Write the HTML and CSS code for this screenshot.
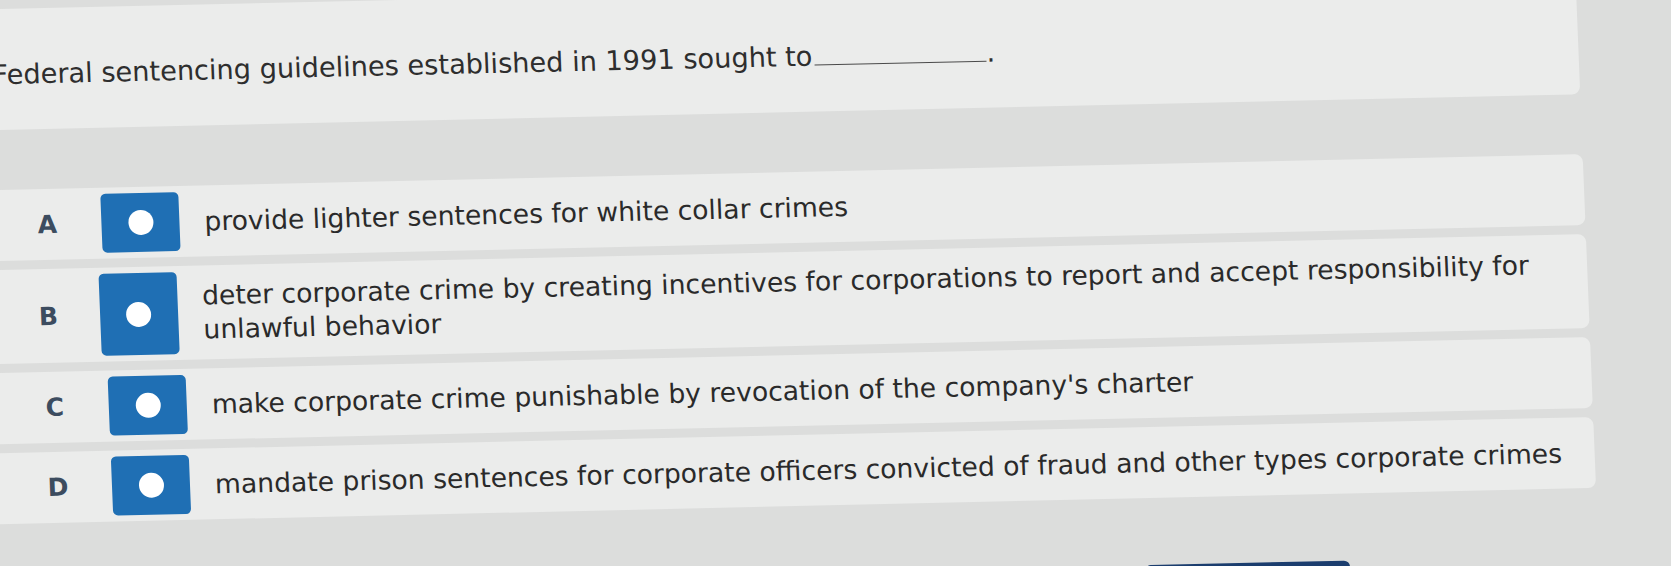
FILE: index.html
```html
<!DOCTYPE html>
<html lang="en">

<head>
  <meta charset="UTF-8">
  <meta name="viewport" content="width=device-width, initial-scale=1.0">
  <title>Question</title>
  <link rel="stylesheet" href="styles.css">
</head>

<body>
  <div class="screen">
    <!-- Question -->
    <div class="question-card">
      <p class="question">Federal sentencing guidelines established in 1991 sought to<span class="blank"></span>.</p>
    </div>

    <!-- Answer choices -->
    <div class="options">
      <div class="option">
        <span class="option-letter">A</span>
        <span class="radio"><span class="radio-dot"></span></span>
        <span class="option-text">provide lighter sentences for white collar crimes</span>
      </div>
      <div class="option">
        <span class="option-letter">B</span>
        <span class="radio"><span class="radio-dot"></span></span>
        <span class="option-text">deter corporate crime by creating incentives for corporations to report and accept responsibility for unlawful behavior</span>
      </div>
      <div class="option">
        <span class="option-letter">C</span>
        <span class="radio"><span class="radio-dot"></span></span>
        <span class="option-text">make corporate crime punishable by revocation of the company's charter</span>
      </div>
      <div class="option">
        <span class="option-letter">D</span>
        <span class="radio"><span class="radio-dot"></span></span>
        <span class="option-text">mandate prison sentences for corporate officers convicted of fraud and other types corporate crimes</span>
      </div>
    </div>

    <div class="footer">
      <button class="submit-btn" aria-label="Submit"></button>
    </div>
  </div>
</body>

</html>
```

FILE: styles.css
```css
* {
  margin: 0;
  padding: 0;
  box-sizing: border-box;
}

body {
  background-color: #dcdddc;
  font-family: "DejaVu Sans", Verdana, sans-serif;
  height: 566px;
  overflow: hidden;
}

/* the photo is taken at a slight angle */
.screen {
  width: 1612px;
  margin: -10px 0 0 -24px;
  transform-origin: 866px 310px;
  transform: rotate(-1.3deg) skewX(1deg);
}

.question-card {
  height: 121px;
  padding: 49px 0 0 26px;
  background-color: #ebeceb;
  border-radius: 0 0 8px 0;
}

.question {
  font-size: 27.2px;
  line-height: 34px;
  color: #2e2e2e;
  white-space: nowrap;
}

.blank {
  display: inline-block;
  width: 172px;
  margin-left: 2px;
  border-bottom: 1px solid #4a4a4a;
}

.options {
  margin-top: 60px;
  display: flex;
  flex-direction: column;
  gap: 9px;
}

.option {
  display: flex;
  align-items: center;
  padding: 6px 0 6px 55px;
  background-color: #ebeceb;
  border-radius: 8px;
}

.option-letter {
  width: 40px;
  text-align: center;
  font-size: 25px;
  font-weight: bold;
  color: #3c4c5f;
}

.radio {
  align-self: stretch;
  flex-shrink: 0;
  width: 78px;
  min-height: 59px;
  margin-left: 34px;
  background-color: #1f6fb4;
  border-radius: 5px;
  display: flex;
  align-items: center;
  justify-content: center;
}

.radio-dot {
  width: 25px;
  height: 25px;
  border-radius: 50%;
  background-color: white;
}

.option-text {
  margin-left: 25px;
  padding: 7px 20px 7px 0;
  font-size: 26.6px;
  line-height: 34px;
  color: #2a2a2a;
}

.footer {
  display: flex;
  justify-content: flex-end;
  padding-right: 249px;
  margin-top: 67px;
}

.submit-btn {
  width: 205px;
  height: 48px;
  background-color: #1b3d6e;
  border: none;
  border-radius: 6px;
}
```
